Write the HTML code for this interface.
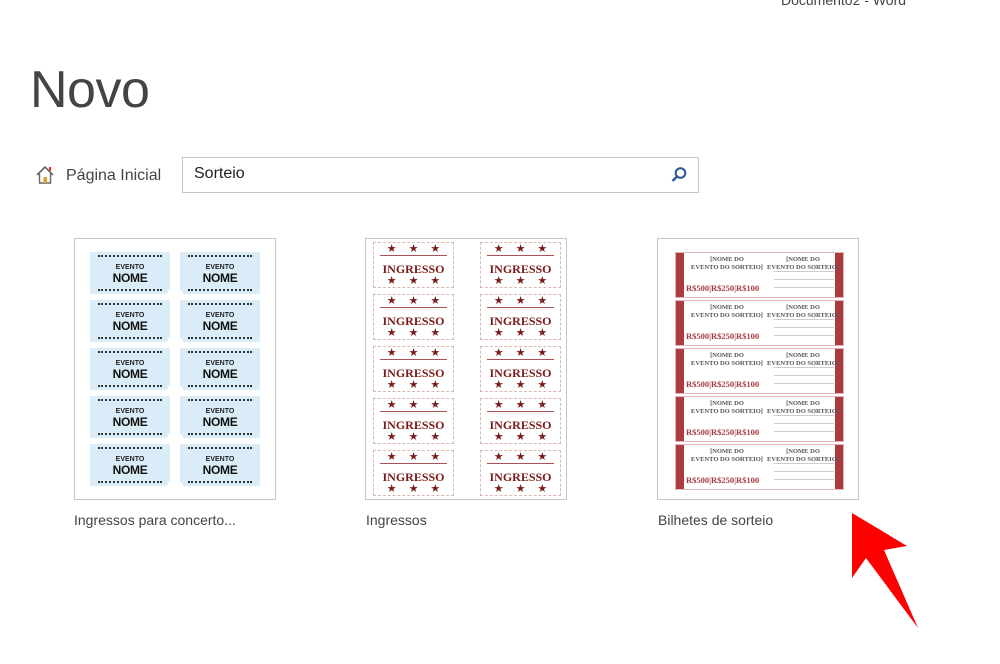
<!DOCTYPE html>
<html><head><meta charset="utf-8"><style>
*{margin:0;padding:0;box-sizing:border-box}
body{width:1000px;height:664px;background:#fff;font-family:"Liberation Sans",sans-serif;position:relative;overflow:hidden}
.abs{position:absolute}
.thumb{position:absolute;top:238px;width:202px;height:262px;border:1px solid #c6c6c6;background:#fff;overflow:hidden}
.cap{position:absolute;top:512px;font-size:14px;color:#444}
.bt{position:absolute;background:#d9ecf7;width:80px;height:42px;text-align:center}
.bt .dots{position:absolute;left:8px;right:8px;height:2px;border-top:2px dotted #333}
.bt .e{position:absolute;top:12px;width:100%;font-size:7px;font-weight:bold;color:#222}
.bt .n{position:absolute;top:19px;width:100%;font-size:12px;font-weight:bold;color:#111;letter-spacing:-.3px}
.it{position:absolute;width:81px;height:46px;border:1px dashed #d7b7b7;text-align:center;color:#7a1a1a}
.it .s{position:absolute;width:100%;font-size:11px;letter-spacing:12px;padding-left:12px;line-height:11px}
.it .g{position:absolute;top:19px;width:100%;font-size:12px;font-weight:bold;font-family:"Liberation Serif",serif}
.it .l{position:absolute;left:6px;right:6px;top:12px;border-top:1px solid #a55;height:5px}
.rt{position:absolute;left:674px;width:169px;height:46px;border:1px solid #e2b5b5;background:#fff}
.rt .r{position:absolute;top:0;width:8px;height:100%;background:#a83c40}
.rt .h{position:absolute;top:3px;font-size:6.5px;font-weight:bold;color:#555;font-family:"Liberation Serif",serif;text-align:center;line-height:8px}
.rt .m{position:absolute;left:10px;top:30px;font-size:8.5px;font-weight:bold;color:#a83c40;font-family:"Liberation Serif",serif}
.rt .ln{position:absolute;left:98px;width:60px;border-top:1px solid #ccc}
</style></head><body>
<div class="abs" style="left:781px;top:-8px;font-size:14px;color:#444">Documento2 - Word</div>
<div class="abs" style="left:30px;top:60px;font-size:52px;color:#444;letter-spacing:-0.5px">Novo</div>
<svg class="abs" style="left:35px;top:165px" width="20" height="20" viewBox="0 0 20 20"><path d="M2 10 L10 2 L18 10" fill="none" stroke="#666" stroke-width="1.6"/><path d="M4.5 8.5 V18 H15.5 V8.5" fill="#fff" stroke="#666" stroke-width="1.4"/><rect x="8.5" y="12" width="3.5" height="6" fill="#e0a030"/><rect x="14" y="2" width="2" height="4" fill="#d33"/></svg>
<div class="abs" style="left:66px;top:167px;font-size:16px;color:#444">Página Inicial</div>
<div class="abs" style="left:182px;top:157px;width:517px;height:36px;border:1px solid #c6c6c6"></div>
<div class="abs" style="left:194px;top:165px;font-size:16px;color:#222">Sorteio</div>
<svg class="abs" style="left:670px;top:166px" width="18" height="18" viewBox="0 0 18 18"><circle cx="10.5" cy="7" r="4.8" fill="none" stroke="#2b5797" stroke-width="2"/><path d="M7 10.5 L2.5 15" stroke="#2b5797" stroke-width="2.4"/></svg>
<div class="thumb" style="left:74px" id="t1"></div>
<div class="thumb" style="left:365px" id="t2"></div>
<div class="thumb" style="left:657px" id="t3"></div>
<div class="cap" style="left:74px">Ingressos para concerto...</div>
<div class="cap" style="left:366px">Ingressos</div>
<div class="cap" style="left:658px">Bilhetes de sorteio</div>
<svg class="abs" style="left:0;top:0" width="1000" height="664"><polygon points="852,513 907,546 884,550 918,628 866,558 852,578" fill="#ff0000"/></svg>
<script>
var h='';
for(var r=0;r<5;r++){var y=13+r*48;
[15,105].forEach(function(x){h+='<div class="bt" style="left:'+x+'px;top:'+y+'px"><div class="dots" style="top:3px"></div><div class="e">EVENTO</div><div class="n">NOME</div><div class="dots" style="bottom:3px"></div></div>';});
h+='<div class="abs" style="left:91px;top:'+(y+36)+'px;width:18px;height:18px;border-radius:50%;background:#fff"></div>';}
document.getElementById('t1').innerHTML=h;
h='';
for(var r=0;r<5;r++){var y=3+r*52;
[7,114].forEach(function(x){h+='<div class="it" style="left:'+x+'px;top:'+y+'px"><div class="s" style="top:1px">★★★</div><div class="l"></div><div class="g">INGRESSO</div><div class="s" style="top:33px">★★★</div></div>';});}
document.getElementById('t2').innerHTML=h;
h='';
for(var r=0;r<5;r++){var y=13+r*48;
h+='<div class="rt" style="top:'+y+'px;left:17px"><div class="r" style="left:0"></div><div class="r" style="right:0"></div><div class="h" style="left:12px;width:78px">[NOME DO<br>EVENTO DO SORTEIO]</div><div class="h" style="left:90px;width:74px">[NOME DO<br>EVENTO DO SORTEIO]</div><div class="m">R$500|R$250|R$100</div><div class="ln" style="top:18px"></div><div class="ln" style="top:26px"></div><div class="ln" style="top:34px"></div></div>';}
document.getElementById('t3').innerHTML=h;
</script>
</body></html>
